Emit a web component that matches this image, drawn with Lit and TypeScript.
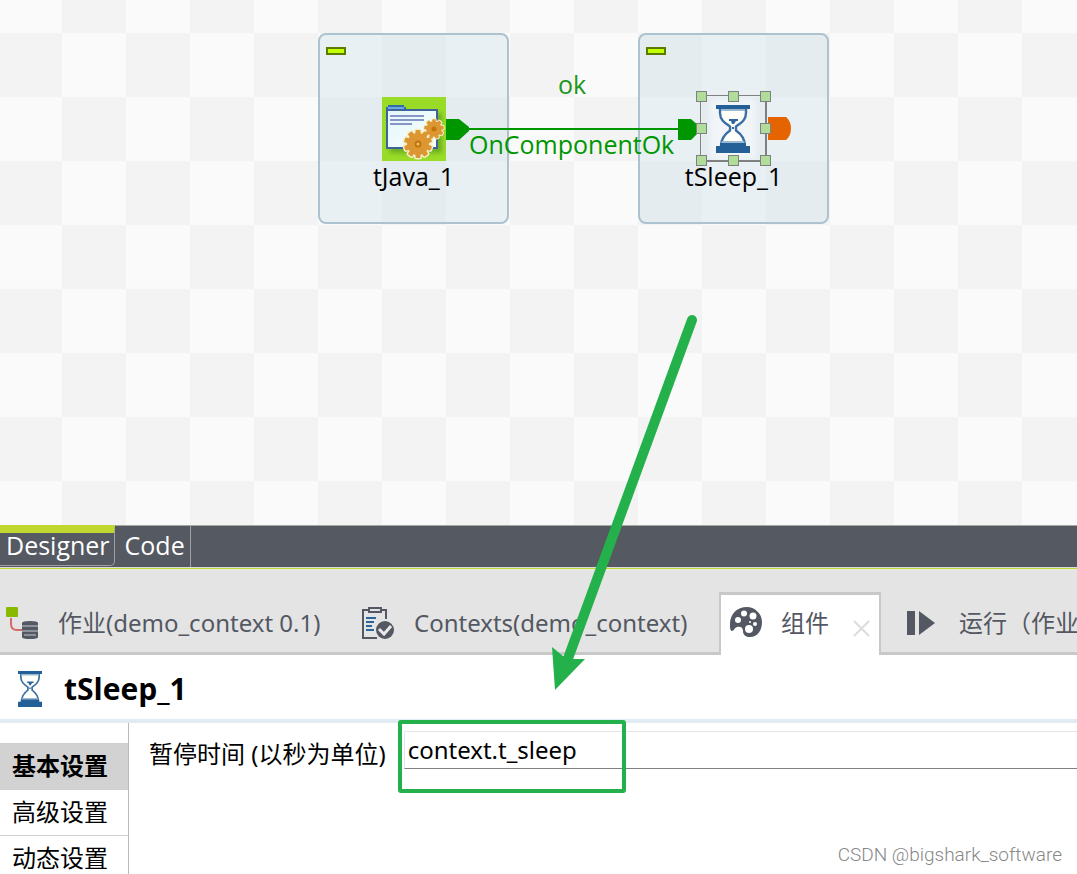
import { LitElement, html, css, svg } from "lit";
import { customElement, property } from "lit/decorators.js";

@customElement("hourglass-icon")
class HourglassIcon extends LitElement {
  static styles = css`
    :host { display: block; }
    svg { display: block; width: 100%; height: 100%; }
  `;
  render() {
    return html`<svg viewBox="0 0 34 48" preserveAspectRatio="none" aria-hidden="true">
      <path d="M3 4H31V8C31 15 26 19 22 21V26C27 29 30 33 30 40V42H4V40C4 33 7 29 12 26V21C8 19 3 15 3 8Z" fill="#fffffb"/>
      <path d="M4 4V8C4 15 9 18 14 21.5V25.500C9 29 5 33 5 41M30 4V8C30 15 25 18 20 21.500V25.500C25 29 29 33 29 41" fill="none" stroke="#3a6fa3" stroke-width="2.400"/>
      <path d="M5 4H29V6H5ZM6 36H28L29 39H5Z" fill="#9db9d2"/>
      <path d="M13 14H22V16H20L18 19H16L15 16H13ZM16 22H18V24H16Z" fill="#2f659a"/>
      <path d="M0 0H34V4H0ZM4 38H30V41H34V48H0V41H4Z" fill="#245f97"/>
    </svg>`;
  }
}

@customElement("flow-canvas")
class FlowCanvas extends LitElement {
  static styles = css`
    :host {
      display: block;
      position: relative;
      overflow: hidden;
      background: conic-gradient(#f3f3f3 25%, #fafafa 0 50%, #f3f3f3 0 75%, #fafafa 0) -2px -31px / 128px 128px;
      font-size: 25px;
      line-height: 32px;
      color: #000;
    }
    .node {
      position: absolute;
      top: 33px;
      width: 191px;
      height: 191px;
      box-sizing: border-box;
      border: 2px solid #acc2cf;
      border-radius: 8px;
      background: rgba(205, 226, 236, 0.4);
    }
    .java { left: 318px; }
    .sleep { left: 638px; }
    .collapse {
      position: absolute;
      left: 6px;
      top: 12px;
      width: 20px;
      height: 8px;
      padding: 0;
      border: 2px solid #5c7a00;
      background: #c3ff00;
    }
    .name {
      position: absolute;
      top: 125px;
      left: 0;
      right: 0;
      text-align: center;
    }
    .glyph { position: absolute; display: block; }
    .folder { left: 62px; top: 62px; width: 64px; height: 64px; }
    .halo {
      left: 70px; top: 64px; width: 46px; height: 60px;
      background: rgba(255, 255, 255, 0.5);
      filter: blur(3px);
    }
    .glass { left: 76px; top: 70px; width: 34px; height: 48px; }
    .wires { position: absolute; left: 440px; top: 90px; width: 360px; height: 80px; }
    .link { position: absolute; color: #009600; white-space: nowrap; }
    .state { left: 558px; top: 68px; color: #1c961c; }
    .trigger { left: 469px; top: 128px; }
  `;
  handle(x: number, y: number) {
    return svg`<rect x=${x + 0.5} y=${y + 0.5} width="10" height="10" fill="#b0dd99" stroke="#808080"/>`;
  }
  render() {
    const teeth = (n: number) =>
      Array.from({ length: n }, (_, i) => svg`<rect x="-2.500" y="-14" width="5" height="6" rx="1" transform=${`rotate(${(i * 360) / n})`}/>`);
    return html`
      <div class="node java">
        <button class="collapse" aria-label="Collapse tJava_1"></button>
        <svg class="glyph folder" viewBox="0 0 64 64" aria-hidden="true">
          <defs>
            <linearGradient id="page" x2="1" y2="1"><stop stop-color="#e4f6fd"/><stop offset="1" stop-color="#f8fffa"/></linearGradient>
            <filter id="soft"><feGaussianBlur stdDeviation="2"/></filter>
          </defs>
          <rect width="64" height="64" fill="#99db27"/>
          <rect x="8" y="16" width="52" height="40" fill="#4c8a20" opacity=".55" filter="url(#soft)"/>
          <path d="M6 8H22V10H24V13H4V10H6Z" fill="#2f6cae"/>
          <path d="M6 10H22V12H6Z" fill="#6fa9dd"/>
          <rect x="5" y="13" width="50" height="38" fill="url(#page)" stroke="#3f649c" stroke-width="2"/>
          <path d="M8 19H42M8 23H42M8 27H30" stroke="#8696c8" stroke-width="2"/>
          <g fill="#dc9632" stroke="#f4efc8" stroke-width="3">
            <g transform="translate(52 32) scale(.7)">${teeth(9)}<circle r="11"/></g>
            <g transform="translate(36 47)">${teeth(10)}<circle r="11"/></g>
          </g>
          <g fill="#dc9632">
            <g transform="translate(52 32) scale(.7)">${teeth(9)}<circle r="11"/></g>
            <g transform="translate(36 47)">${teeth(10)}<circle r="11"/></g>
          </g>
          <circle cx="52" cy="32" r="2.500" fill="#c27508"/>
          <circle cx="36" cy="47" r="2.500" fill="#f0c070" stroke="#c27508" stroke-width="2"/>
        </svg>
        <div class="name">tJava_1</div>
      </div>
      <div class="node sleep">
        <button class="collapse" aria-label="Collapse tSleep_1"></button>
        <div class="glyph halo"></div>
        <hourglass-icon class="glyph glass"></hourglass-icon>
        <div class="name">tSleep_1</div>
      </div>
      <svg class="wires" viewBox="440 90 360 80" aria-hidden="true">
        <path d="M446 119H459L469 127V131L459 140H446ZM678 119H691L700 127V131L691 140H678Z" fill="#009600"/>
        <path d="M468 129H680" stroke="#009600" stroke-width="2"/>
        <path d="M768 117H786Q791 121 791 128.500T786 140H768Z" fill="#e66400"/>
        <path d="M700.500 95.500V161M700 95.500H767" fill="none" stroke="#808080"/>
        <path d="M766 95V162M700 161H767" fill="none" stroke="#808080" stroke-width="2"/>
        ${[91, 123, 155].map((y) => [696, 728, 760].map((x) => (x === 728 && y === 123 ? null : this.handle(x, y))))}
      </svg>
      <span class="link state">ok</span>
      <span class="link trigger">OnComponentOk</span>
    `;
  }
}

@customElement("view-icon")
class ViewIcon extends LitElement {
  @property() name = "";
  static styles = css`
    :host { display: block; flex: none; width: 34px; height: 34px; }
    svg { display: block; }
  `;
  shape() {
    switch (this.name) {
      case "job":
        return svg`
          <path d="M5 12V18Q5 24 11 24H17" fill="none" stroke="#d66a68" stroke-width="2"/>
          <rect y="1" width="12" height="10" rx="1" fill="#8aba00"/>
          <path d="M16 17Q16 15 24 15T32 17V31Q32 33 24 33T16 31Z" fill="#535862"/>
          <path d="M16 20H32M16 25H32M18 29H30" fill="none" stroke="#a2a5ad" stroke-width="1.500"/>`;
      case "contexts":
        return svg`
          <path d="M9 4H3V32H17M21 4H26V13" fill="none" stroke="#535862" stroke-width="2"/>
          <rect x="9" y="2" width="12" height="4" fill="#e4e4e4" stroke="#535862" stroke-width="2"/>
          <path d="M6 12H16M6 16H14M6 20H12M6 24H14" stroke="#2a659b" stroke-width="2"/>
          <circle cx="25" cy="24" r="9" fill="#535862"/>
          <path d="M19 23L24 28L31 20" fill="none" stroke="#e9e9ea" stroke-width="3"/>`;
      case "component":
        return svg`
          <path d="M18 1C25 1 33 7 33 16C33 25 28 31 21 31C17 31 14 29 14 25C14 21 11 20 8 21C5 22 5 25 3 25C1 25 1 21 1 18C1 8 8 1 18 1Z" fill="#535862"/>
          <g fill="#fff"><circle cx="15" cy="7.500" r="3"/><circle cx="24" cy="10" r="3.500"/><circle cx="9" cy="14" r="3"/><circle cx="20" cy="23" r="4"/><circle cx="26" cy="18" r="2"/><circle cx="21" cy="16" r="1"/></g>`;
      default:
        return svg`<path d="M2 5H10V29H2ZM14 5L30 17L14 29Z" fill="#535862"/>`;
    }
  }
  render() {
    return html`<svg width="34" height="34" viewBox="0 0 34 34" aria-hidden="true">${this.shape()}</svg>`;
  }
}

@customElement("app-root")
class AppRoot extends LitElement {
  static styles = css`
    :host {
      display: flex;
      flex-direction: column;
      position: relative;
      height: 100vh;
      overflow: hidden;
      background: #fff;
      font-family: "Open Sans", "Noto Sans CJK SC", sans-serif;
      font-size: 24px;
      line-height: 32px;
      color: #000;
    }
    button, input { font: inherit; color: inherit; }
    button { border: 0; padding: 0; background: none; white-space: nowrap; }
    flow-canvas { flex: 1; min-height: 0; }
    .editors {
      display: flex;
      flex: none;
      height: 44px;
      box-sizing: border-box;
      border-top: 1px solid #a6a6a6;
      border-bottom: 1px solid #bfd72e;
      background: #555962;
      box-shadow: inset 0 -1px #dcdcdc;
      color: #fff;
      font-size: 25px;
    }
    .editors button { box-sizing: border-box; height: 41px; padding: 0 5px 3px 10px; border-right: 1px solid #a0a0a0; }
    .editors .current {
      height: 41px;
      margin-top: -1px;
      padding: 0 4px 8px 6px;
      line-height: 24px;
      border-top: 8px solid #bfd72e;
      border-bottom: 1px solid #a0a0a0;
      border-radius: 0 0 5px 0;
    }
    .views, .field { font-family: "Noto Sans", "Noto Sans CJK SC", sans-serif; }
    .views {
      display: flex;
      align-items: stretch;
      flex: none;
      box-sizing: border-box;
      height: 86px;
      padding-top: 22px;
      border-top: 1px solid #eeeedf;
      background: #e4e4e4;
      color: #535862;
      overflow: hidden;
    }
    .view {
      display: flex;
      flex: none;
      box-sizing: border-box;
      padding-top: 2px;
      border-bottom: 3px solid #c8c8c8;
    }
    .view button { display: flex; align-items: center; }
    .job { width: 360px; padding-left: 6px; }
    .job button { gap: 18px; }
    .contexts { width: 359px; }
    .contexts button { gap: 20px; }
    .component {
      width: 162px;
      padding: 0 9px 5px 8px;
      border: solid #c8c8c8;
      border-width: 3px 2px 0;
      background: #fff;
      justify-content: space-between;
    }
    .component button { gap: 18px; }
    .run { flex: 1; padding-left: 24px; }
    .run button { gap: 20px; }
    .component .close { align-self: flex-end; padding-bottom: 13px; }
    .heading {
      display: flex;
      align-items: center;
      flex: none;
      box-sizing: border-box;
      height: 68px;
      padding: 4px 18px 0;
      gap: 22px;
      border-bottom: 4px solid #e2eaf4;
    }
    .heading hourglass-icon { width: 24px; height: 36px; }
    h1 { margin: 0; font-size: 30px; line-height: 36px; font-weight: 700; }
    .properties { display: flex; flex: 0 0 151px; min-height: 0; overflow: hidden; }
    .sections {
      flex: none;
      box-sizing: border-box;
      width: 129px;
      padding-top: 20px;
      border-right: 1px solid #bbb;
    }
    .sections button {
      display: block;
      box-sizing: border-box;
      width: 100%;
      height: 46px;
      padding: 0 0 2px 12px;
      text-align: left;
      border-top: 1px solid #d0d0d0;
    }
    .sections .chosen { background: #d2d2d2; font-weight: 700; }
    .field { display: flex; flex: 1; align-items: flex-start; padding: 8px 0 0 20px; gap: 18px; }
    .field label { padding-top: 7px; white-space: nowrap; }
    .field input {
      flex: 1;
      min-width: 0;
      box-sizing: border-box;
      height: 38px;
      padding: 0 3px 2px;
      border: 1px solid #e6e6e6;
      border-right: 0;
      border-bottom: 1px solid #808080;
      border-radius: 0;
      background: #fff;
      outline: none;
    }
    .marks { position: absolute; left: 0; bottom: 0; pointer-events: none; }
    .watermark {
      position: absolute;
      right: 15px;
      bottom: 7px;
      font-family: Roboto, sans-serif;
      font-size: 19px;
      font-weight: 300;
      line-height: 24px;
      color: #888;
    }
  `;
  render() {
    return html`
      <flow-canvas></flow-canvas>
      <nav class="editors">
        <button class="current">Designer</button>
        <button>Code</button>
      </nav>
      <nav class="views">
        <div class="view job"><button><view-icon name="job"></view-icon>作业(demo_context 0.1)</button></div>
        <div class="view contexts"><button><view-icon name="contexts"></view-icon>Contexts(demo_context)</button></div>
        <div class="view component">
          <button><view-icon name="component"></view-icon>组件</button>
          <button class="close" aria-label="Close"><svg width="17" height="17" viewBox="0 0 17 17"><path d="M1 1L16 16M16 1L1 16" stroke="#dcdcdc" stroke-width="2"/></svg></button>
        </div>
        <div class="view run"><button><view-icon name="run"></view-icon>运行（作业</button></div>
      </nav>
      <header class="heading">
        <hourglass-icon></hourglass-icon>
        <h1>tSleep_1</h1>
      </header>
      <section class="properties">
        <nav class="sections">
          <button class="chosen">基本设置</button>
          <button>高级设置</button>
          <button>动态设置</button>
        </nav>
        <div class="field">
          <label for="pause">暂停时间 (以秒为单位)</label>
          <input id="pause" type="text" .value=${"context.t_sleep"} />
        </div>
      </section>
      <svg class="marks" width="700" height="574" viewBox="0 300 700 574" aria-hidden="true">
        <path d="M692 320L566 664" stroke="#24b14c" stroke-width="10" stroke-linecap="round"/>
        <path d="M552 647L563 656L573 659L585 659L555 690Z" fill="#24b14c"/>
        <rect x="400" y="722" width="224" height="69" rx="1" fill="none" stroke="#24b14c" stroke-width="4"/>
      </svg>
      <div class="watermark">CSDN @bigshark_software</div>
    `;
  }
}
